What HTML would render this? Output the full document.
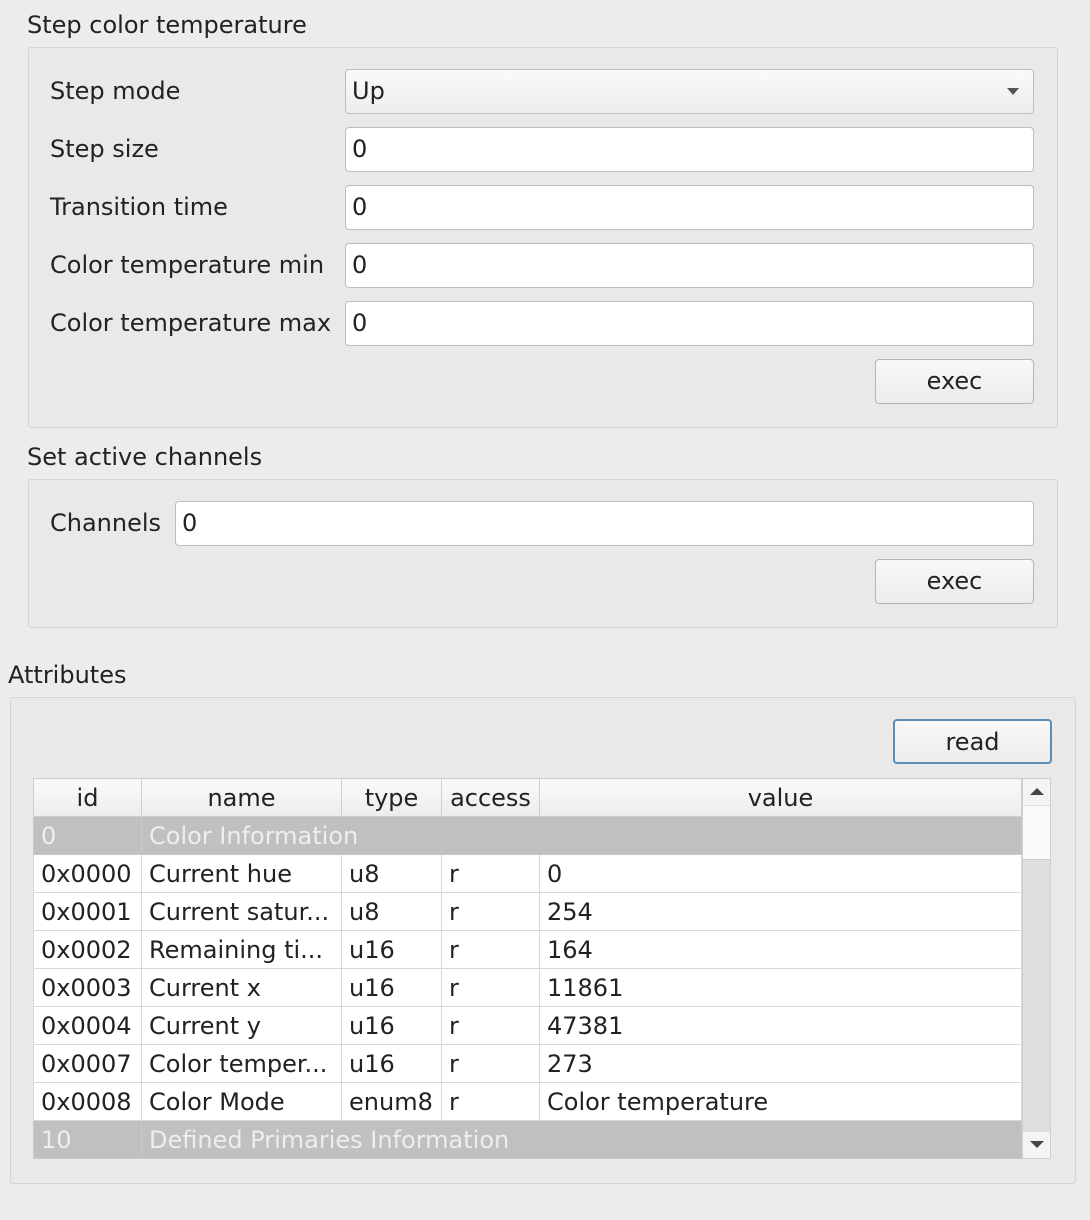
<!DOCTYPE html>
<html><head><style>
*{box-sizing:border-box;margin:0;padding:0}
body{width:1090px;height:1220px;background:#ececec;font-family:"DejaVu Sans","Liberation Sans",sans-serif;font-size:24px;color:#222;position:relative;overflow:hidden}
.a{position:absolute}
.frame{position:absolute;border:1px solid #d4d4d4;border-radius:3px;background:#e9e9e9}
.inp{position:absolute;background:#fff;border:1px solid #bdbdbd;border-radius:4px;padding-left:6px;line-height:42px}
.btn{position:absolute;background:linear-gradient(#f8f8f8,#ececec);border:1px solid #b5b5b5;border-radius:4px;text-align:center;line-height:42px}
.lbl{position:absolute;line-height:30px}
table{border-collapse:collapse;table-layout:fixed;position:absolute;left:33px;top:778px;width:989px}
td,th{height:38px;border:1px solid #d8d8d8;padding-left:7px;white-space:nowrap;overflow:hidden;font-weight:normal;text-align:left}
th{text-align:center;padding:0;background:linear-gradient(#fafafa,#ececec);border-color:#cfcfcf}
tr.g td{background:#c0c0c0;color:#eee;border-color:#c8c8c8}
td{background:#fff}
</style></head><body>
<div class="lbl" style="left:27px;top:10px">Step color temperature</div>
<div class="frame" style="left:28px;top:47px;width:1030px;height:381px"></div>
<div class="lbl" style="left:50px;top:76px">Step mode</div>
<div class="lbl" style="left:50px;top:134px">Step size</div>
<div class="lbl" style="left:50px;top:192px">Transition time</div>
<div class="lbl" style="left:50px;top:250px">Color temperature min</div>
<div class="lbl" style="left:50px;top:308px">Color temperature max</div>
<div class="inp" style="left:345px;top:69px;width:689px;height:45px;background:linear-gradient(#fafafa,#ededed)">Up<span class="a" style="right:14px;top:18px;width:0;height:0;border-left:6px solid transparent;border-right:6px solid transparent;border-top:7px solid #555"></span></div>
<div class="inp" style="left:345px;top:127px;width:689px;height:45px">0</div>
<div class="inp" style="left:345px;top:185px;width:689px;height:45px">0</div>
<div class="inp" style="left:345px;top:243px;width:689px;height:45px">0</div>
<div class="inp" style="left:345px;top:301px;width:689px;height:45px">0</div>
<div class="btn" style="left:875px;top:359px;width:159px;height:45px">exec</div>

<div class="lbl" style="left:27px;top:442px">Set active channels</div>
<div class="frame" style="left:28px;top:479px;width:1030px;height:149px"></div>
<div class="lbl" style="left:50px;top:508px">Channels</div>
<div class="inp" style="left:175px;top:501px;width:859px;height:45px">0</div>
<div class="btn" style="left:875px;top:559px;width:159px;height:45px">exec</div>

<div class="lbl" style="left:8px;top:660px">Attributes</div>
<div class="frame" style="left:10px;top:697px;width:1066px;height:487px"></div>
<div class="btn" style="left:893px;top:719px;width:159px;height:45px;border:2px solid #5b8db5">read</div>
<table>
<colgroup><col style="width:108px"><col style="width:200px"><col style="width:100px"><col style="width:98px"><col></colgroup>
<tr><th>id</th><th>name</th><th>type</th><th>access</th><th>value</th></tr>
<tr class="g"><td>0</td><td colspan="4" style="overflow:visible">Color Information</td></tr>
<tr><td>0x0000</td><td>Current hue</td><td>u8</td><td>r</td><td>0</td></tr>
<tr><td>0x0001</td><td>Current satur...</td><td>u8</td><td>r</td><td>254</td></tr>
<tr><td>0x0002</td><td>Remaining ti...</td><td>u16</td><td>r</td><td>164</td></tr>
<tr><td>0x0003</td><td>Current x</td><td>u16</td><td>r</td><td>11861</td></tr>
<tr><td>0x0004</td><td>Current y</td><td>u16</td><td>r</td><td>47381</td></tr>
<tr><td>0x0007</td><td>Color temper...</td><td>u16</td><td>r</td><td>273</td></tr>
<tr><td>0x0008</td><td>Color Mode</td><td>enum8</td><td>r</td><td>Color temperature</td></tr>
<tr class="g"><td>10</td><td colspan="4">Defined Primaries Information</td></tr>
</table>
<div class="a" style="left:1022px;top:778px;width:29px;height:381px;background:#dedede;border:1px solid #cfcfcf"></div>
<div class="a" style="left:1023px;top:779px;width:27px;height:26px;background:#f4f4f4"></div>
<div class="a" style="left:1030px;top:788px;width:0;height:0;border-left:7px solid transparent;border-right:7px solid transparent;border-bottom:7px solid #444"></div>
<div class="a" style="left:1023px;top:806px;width:27px;height:54px;background:#fafafa;border-bottom:1px solid #ccc"></div>
<div class="a" style="left:1023px;top:1132px;width:27px;height:26px;background:#f4f4f4"></div>
<div class="a" style="left:1030px;top:1141px;width:0;height:0;border-left:7px solid transparent;border-right:7px solid transparent;border-top:7px solid #444"></div>
</body></html>
